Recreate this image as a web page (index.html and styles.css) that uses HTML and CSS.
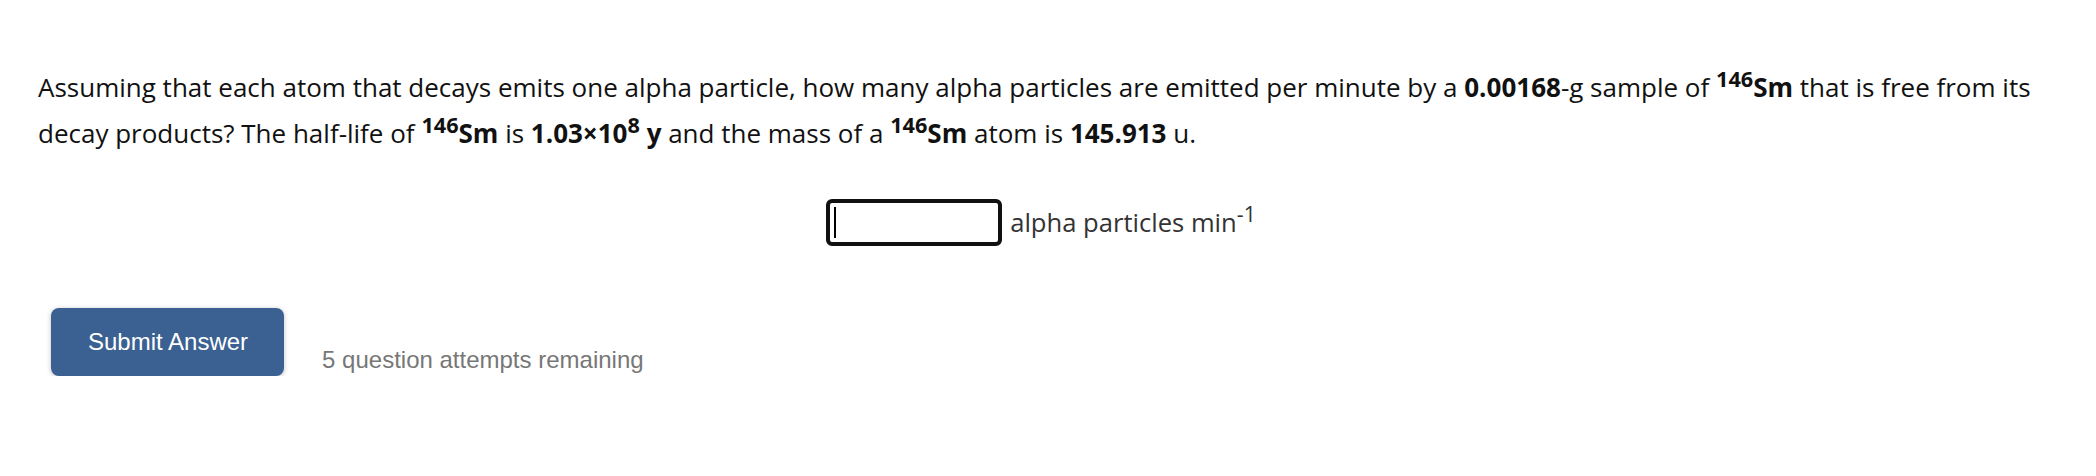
FILE: index.html
```html
<!DOCTYPE html>
<html lang="en">
<head>
<meta charset="utf-8">
<title>Question</title>
<link rel="stylesheet" href="styles.css">
</head>
<body>
<div class="page">
  <p class="question">Assuming that each atom that decays emits one alpha particle, how many alpha particles are emitted per minute by a <b>0.00168</b>-g sample of <b><sup>146</sup>Sm</b> that is free from its decay products? The half-life of <b><sup>146</sup>Sm</b> is <b>1.03&times;10<sup>8</sup> y</b> and the mass of a <b><sup>146</sup>Sm</b> atom is <b>145.913</b> u.</p>
  <div class="answer-row">
    <div class="answer-box"><span class="caret"></span></div>
    <span class="unit">alpha particles min<sup>-1</sup></span>
  </div>
  <div class="submit-row">
    <button class="submit-btn" type="button">Submit Answer</button>
    <span class="attempts">5 question attempts remaining</span>
  </div>
</div>
</body>
</html>
```
FILE: styles.css
```css
html, body {
  margin: 0;
  padding: 0;
  background: #ffffff;
}

.page {
  padding: 0 38px;
  font-family: "Open Sans", "Liberation Sans", sans-serif;
}

.question {
  margin: 64px 0 0 0;
  font-size: 26px;
  line-height: 46px;
  color: #111111;
}

.question b {
  font-weight: 700;
}

.question sup,
.unit sup {
  line-height: 0;
}

.answer-row {
  display: flex;
  justify-content: center;
  align-items: center;
  margin-top: 43px;
  padding-right: 14px;
}

.answer-box {
  box-sizing: border-box;
  width: 176px;
  height: 47px;
  border: 4px solid #111111;
  border-radius: 6px;
  display: flex;
  align-items: center;
  padding-left: 4px;
}

.caret {
  display: block;
  width: 2px;
  height: 31px;
  background: #000000;
}

.unit {
  margin-left: 8px;
  font-size: 25.6px;
  line-height: 46px;
  color: #333333;
}

.submit-row {
  display: flex;
  align-items: flex-start;
  margin-top: 62px;
  padding-left: 13px;
}

.submit-btn {
  box-sizing: border-box;
  height: 68px;
  padding: 0 36px 0 37px;
  border: none;
  border-radius: 8px;
  background: #3a6191;
  color: #ffffff;
  font-family: "Liberation Sans", Arial, sans-serif;
  font-size: 24px;
  box-shadow: 0 1px 5px rgba(0, 0, 0, 0.25);
}

.attempts {
  margin-left: 38px;
  margin-top: 38px;
  font-family: "Liberation Sans", Arial, sans-serif;
  font-size: 24px;
  line-height: 28px;
  color: #777777;
}
```
